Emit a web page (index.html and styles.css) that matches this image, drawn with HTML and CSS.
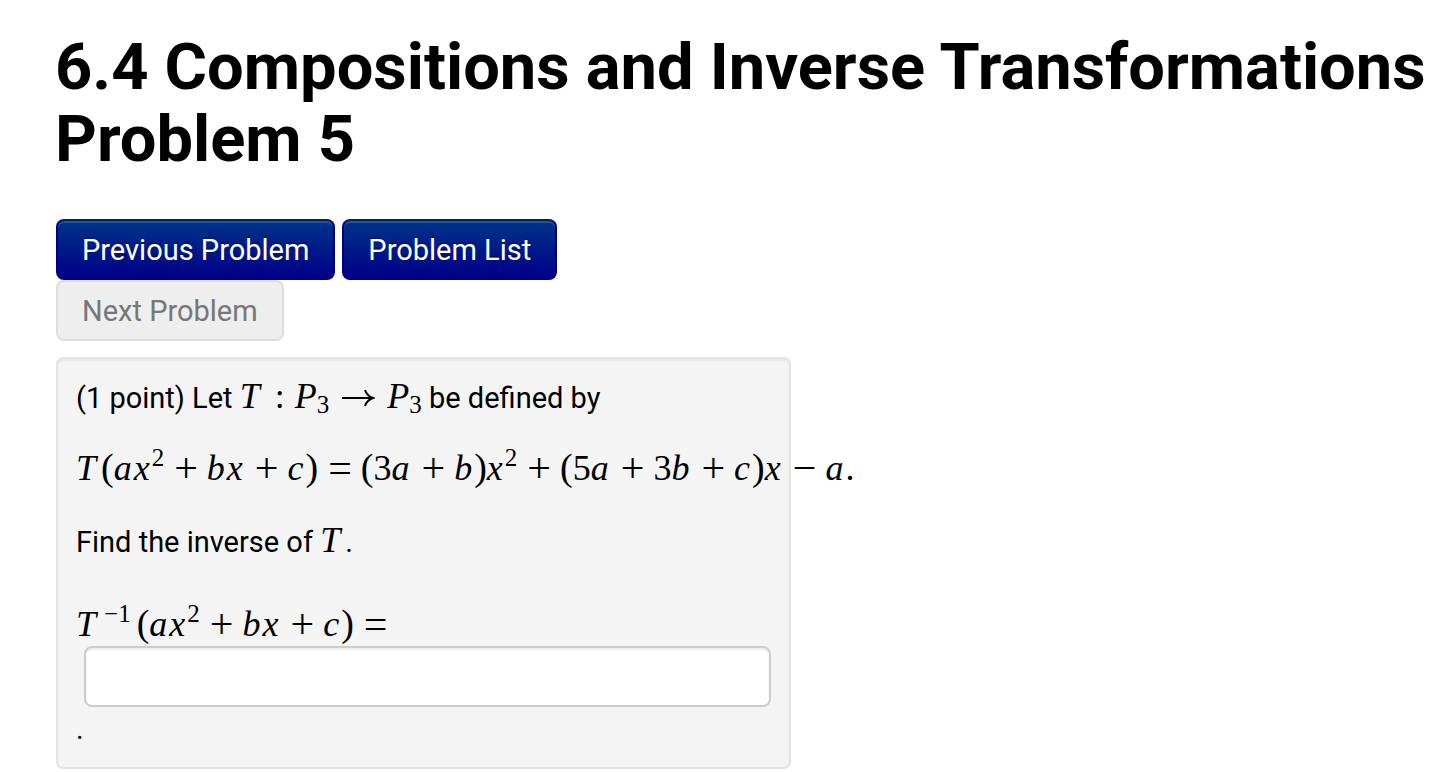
FILE: index.html
```html
<!doctype html>
<html lang="en">
<head>
<meta charset="utf-8">
<title>6.4 Compositions and Inverse Transformations: Problem 5</title>
<link rel="stylesheet" href="styles.css">
</head>

<body>
<h1 class="page-title">6.4 Compositions and Inverse Transformations:<br>Problem 5</h1>

<div class="nav-buttons">
	<div class="nav-row">
		<button type="button" class="btn btn-primary">Previous Problem</button>
		<button type="button" class="btn btn-primary">Problem List</button>
	</div>
	<div class="nav-row">
		<button type="button" class="btn" disabled>Next Problem</button>
	</div>
</div>

<form class="problem">
	<p>(1 point) Let <span class="math"><i class="cap">T</i><span class="rel">:</span><i>P</i><sub>3</sub><svg class="arrow" viewBox="0 0 34 20" aria-label="to"><path d="M1 10H32M24 2Q26 8 32 10Q26 12 24 18"/></svg><i>P</i><sub>3</sub></span> be defined by</p>
	<p class="equation"><span class="math"><i class="cap">T</i><b>(</b><i>a</i><i>x</i><sup>2</sup><span class="op">+</span><i>b</i><i>x</i><span class="op">+</span><i>c</i><b>)</b><span class="op">=</span><b>(</b>3<i>a</i><span class="op">+</span><i>b</i><b>)</b><i>x</i><sup>2</sup><span class="op">+</span><b>(</b>5<i>a</i><span class="op">+</span>3<i>b</i><span class="op">+</span><i>c</i><b>)</b><i>x</i><span class="op">−</span><i>a</i>.</span></p>
	<p>Find the inverse of <span class="math"><i class="cap">T</i></span>.</p>
	<div class="answer">
		<label for="answer1"><span class="math"><i class="cap">T</i><sup class="inverse">−1</sup><b>(</b><i>a</i><i>x</i><sup>2</sup><span class="op">+</span><i>b</i><i>x</i><span class="op">+</span><i>c</i><b>)</b><span class="op">=</span></span></label>
		<input type="text" id="answer1" name="answer1">
		<span>.</span>
	</div>
</form>
</body>
</html>
```
FILE: styles.css
```css
body {
	margin: 0;
	padding: 31px 60px 0 56px;
	background: #fff;
	color: #000;
	font: 29px/40px Roboto, "Liberation Sans", sans-serif;
	overflow: hidden;
}
.page-title {
	margin: 0 0 44px -1px;
	font-size: 65px;
	line-height: 72px;
	font-weight: bold;
	white-space: nowrap;
}
.nav-row {
	display: flex;
	gap: 7px;
}
.btn {
	height: 61px;
	padding: 0 24px;
	border: 2px solid #ddd;
	border-radius: 8px;
	background: #eee;
	color: #777;
	font: inherit;
}
.btn-primary {
	border-color: #002255 #000080 #000080;
	background: #000088 linear-gradient(#003388, #000088);
	box-shadow: inset 0 2px 0 rgba(255, 255, 255, .15);
	color: #fff;
	text-shadow: 0 -2px 0 rgba(0, 0, 0, .25);
}
.problem {
	box-sizing: border-box;
	width: 56%;
	margin-top: 16px;
	padding: 17px 18px 18px;
	border: 2px solid #e3e3e3;
	border-radius: 7px;
	background: #f4f4f4;
	box-shadow: inset 0 2px 2px rgba(0, 0, 0, .05);
}
.problem p {
	margin: 0 0 30px;
	white-space: nowrap;
}
.math {
	font: 36px/40px "Liberation Serif", serif;
	white-space: nowrap;
}
.math i {
	margin-right: 2px;
}
.math .cap {
	margin-right: 5px;
}
.math b {
	font-weight: normal;
	font-size: 38px;
	line-height: 1px;
}
.math sup,
.math sub {
	font-size: 25px;
	line-height: 1px;
}
.math sup {
	vertical-align: 14px;
}
.math sub {
	margin-left: -2px;
	vertical-align: -5px;
}
.math .inverse {
	margin: 0 6px 0 3px;
}
.op {
	margin: 0 9px 0 10px;
	font-size: 42px;
	line-height: 1px;
	vertical-align: -2px;
}
.rel {
	margin: 0 10px;
}
.arrow {
	width: 34px;
	height: 20px;
	margin: 0 12px;
	fill: none;
	stroke: #000;
	stroke-width: 2;
}
.answer {
	display: flex;
	flex-direction: column;
	padding-top: 12px;
}
.answer input {
	box-sizing: border-box;
	height: 61px;
	margin: 0 0 2px 8px;
	padding: 8px 12px;
	border: 2px solid #ccc;
	border-radius: 8px;
	background: #fff;
	box-shadow: inset 0 2px 2px rgba(0, 0, 0, .08);
	font: inherit;
}
```
